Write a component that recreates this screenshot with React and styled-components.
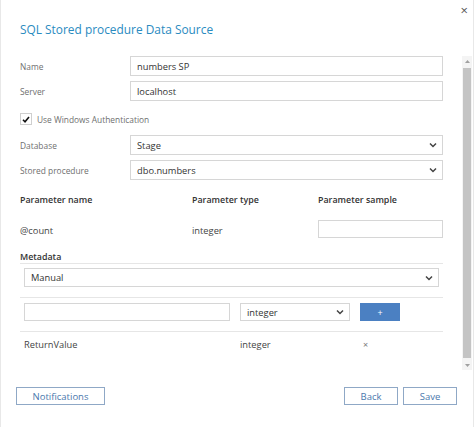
import React from 'react';
import styled, { createGlobalStyle } from 'styled-components';

const GlobalStyle = createGlobalStyle`
    html, body {
        margin: 0;
        padding: 0;
        background: #ffffff;
    }
    body {
        font-family: 'Open Sans', 'Noto Sans', sans-serif;
        color: #333333;
    }
`;

const Chevron = () => (
    <svg width="8" height="6" viewBox="0 0 8 6">
        <path d="M1 1.5 L4 4.5 L7 1.5" fill="none" stroke="#444" strokeWidth="1.5" />
    </svg>
);

const App = () => {
    return (
        <>
            <GlobalStyle />
            <Dialog>
                <CloseButton>×</CloseButton>
                <Title>SQL Stored procedure Data Source</Title>
                <Body>
                    <Content>
                        <FormRow>
                            <Label>Name</Label>
                            <TextBox>numbers SP</TextBox>
                        </FormRow>
                        <FormRow>
                            <Label>Server</Label>
                            <TextBox>localhost</TextBox>
                        </FormRow>
                        <CheckRow>
                            <CheckBox>
                                <svg width="8" height="7" viewBox="0 0 8 7">
                                    <path d="M1 3.8 L3 5.8 L7 1" fill="none" stroke="#111" strokeWidth="1.6" />
                                </svg>
                            </CheckBox>
                            <CheckLabel>Use Windows Authentication</CheckLabel>
                        </CheckRow>
                        <FormRow>
                            <Label>Database</Label>
                            <SelectBox>
                                <span>Stage</span>
                                <Chevron />
                            </SelectBox>
                        </FormRow>
                        <FormRow>
                            <Label>Stored procedure</Label>
                            <SelectBox>
                                <span>dbo.numbers</span>
                                <Chevron />
                            </SelectBox>
                        </FormRow>

                        <ParamHeader>
                            <HeadText>Parameter name</HeadText>
                            <HeadText>Parameter type</HeadText>
                            <HeadText>Parameter sample</HeadText>
                        </ParamHeader>
                        <ParamRow>
                            <CellText>@count</CellText>
                            <CellText>integer</CellText>
                            <SmallBox />
                        </ParamRow>

                        <SectionTitle>Metadata</SectionTitle>
                        <Section>
                            <SelectBox $height={19}>
                                <span>Manual</span>
                                <Chevron />
                            </SelectBox>
                        </Section>
                        <Section>
                            <AddRow>
                                <SmallBox />
                                <SelectBox $height={18}>
                                    <span>integer</span>
                                    <Chevron />
                                </SelectBox>
                                <AddButton>+</AddButton>
                            </AddRow>
                        </Section>
                        <MetaRow>
                            <CellText>ReturnValue</CellText>
                            <CellText>integer</CellText>
                            <RemoveMark>×</RemoveMark>
                        </MetaRow>
                    </Content>
                    <ScrollBar>
                        <ScrollArrow>
                            <svg width="5" height="3" viewBox="0 0 5 3">
                                <path d="M0 3 L2.5 0 L5 3 Z" fill="#a0a0a0" />
                            </svg>
                        </ScrollArrow>
                        <ScrollThumb />
                        <ScrollArrow>
                            <svg width="5" height="3" viewBox="0 0 5 3">
                                <path d="M0 0 L2.5 3 L5 0 Z" fill="#a0a0a0" />
                            </svg>
                        </ScrollArrow>
                    </ScrollBar>
                </Body>
                <Footer>
                    <OutlineButton $width={89}>Notifications</OutlineButton>
                    <FooterRight>
                        <OutlineButton $width={54}>Back</OutlineButton>
                        <OutlineButton $width={54}>Save</OutlineButton>
                    </FooterRight>
                </Footer>
            </Dialog>
        </>
    );
};

export default App;

const Dialog = styled.div`
    position: relative;
    width: 474px;
    height: 427px;
    box-sizing: border-box;
    display: flex;
    flex-direction: column;
    background: #ffffff;
    border-left: 1px solid #e8e8e8;
    border-right: 1px solid #e8e8e8;
`;

const CloseButton = styled.div`
    position: absolute;
    top: 2px;
    right: 5px;
    font-size: 13px;
    color: #555555;
    line-height: 16px;
`;

const Title = styled.h1`
    margin: 0;
    padding: 20px 0 0 19px;
    height: 37px;
    box-sizing: border-box;
    font-size: 11.9px;
    font-weight: 400;
    line-height: 18px;
    color: #2a8bbf;
`;

const Body = styled.div`
    display: flex;
    height: 314px;
    margin-top: 19px;
`;

const Content = styled.div`
    flex: 1;
    padding: 0 19px 0 19px;
    overflow: hidden;
`;

const FormRow = styled.div`
    display: grid;
    grid-template-columns: 110px 1fr;
    align-items: center;
    margin-bottom: 5px;
`;

const Label = styled.span`
    font-size: 8.4px;
    color: #6f6f6f;
`;

const TextBox = styled.div`
    height: 20px;
    box-sizing: border-box;
    border: 1px solid #d6d6d6;
    padding: 0 6px;
    display: flex;
    align-items: center;
    font-size: 9.3px;
    color: #333333;
`;

const SelectBox = styled.div`
    height: ${(p) => p.$height || 20}px;
    box-sizing: border-box;
    border: 1px solid #d6d6d6;
    padding: 0 5px 0 6px;
    display: flex;
    align-items: center;
    justify-content: space-between;
    font-size: 9.3px;
    color: #333333;
`;

const CheckRow = styled.div`
    display: flex;
    align-items: center;
    margin: 12px 0 10px 0;
`;

const CheckBox = styled.div`
    width: 12px;
    height: 12px;
    box-sizing: border-box;
    border: 1px solid #cfcfcf;
    display: flex;
    align-items: center;
    justify-content: center;
    margin-right: 5px;
`;

const CheckLabel = styled.span`
    font-size: 8.4px;
    color: #6f6f6f;
`;

const ParamHeader = styled.div`
    display: grid;
    grid-template-columns: 172px 126px 1fr;
    margin-top: 12px;
    height: 14px;
    align-items: center;
`;

const HeadText = styled.span`
    font-size: 8.9px;
    font-weight: 600;
    color: #333333;
`;

const ParamRow = styled.div`
    display: grid;
    grid-template-columns: 172px 126px 1fr;
    align-items: center;
    margin-top: 14px;
`;

const CellText = styled.span`
    font-size: 9.3px;
    color: #444444;
    padding-top: 3px;
`;

const SmallBox = styled.div`
    height: 18px;
    box-sizing: border-box;
    border: 1px solid #d6d6d6;
`;

const SectionTitle = styled.div`
    margin-top: 12px;
    font-size: 8.9px;
    font-weight: 600;
    color: #333333;
    height: 13px;
    line-height: 13px;
`;

const Section = styled.div`
    border-top: 1px solid #e6e6e6;
    padding: 4px 4px 10px 4px;
`;

const AddRow = styled.div`
    display: grid;
    grid-template-columns: 206px 110px 40px;
    column-gap: 10px;
    align-items: center;
    padding-top: 1px;
`;

const AddButton = styled.div`
    height: 18px;
    background: #4b80c2;
    color: #ffffff;
    font-size: 9px;
    display: flex;
    align-items: center;
    justify-content: center;
`;

const MetaRow = styled.div`
    display: grid;
    grid-template-columns: 216px 123px 1fr;
    align-items: center;
    border-top: 1px solid #e6e6e6;
    padding: 3px 4px 0 4px;
`;

const RemoveMark = styled.span`
    font-size: 9px;
    color: #777777;
    padding-top: 3px;
`;

const ScrollBar = styled.div`
    width: 10px;
    margin-right: 1px;
    display: flex;
    flex-direction: column;
    background: #f4f4f4;
`;

const ScrollArrow = styled.div`
    height: 10px;
    display: flex;
    align-items: center;
    justify-content: center;
`;

const ScrollThumb = styled.div`
    flex: 1;
    margin: 2px 1px;
    background: #c4c4c4;
`;

const Footer = styled.div`
    display: flex;
    justify-content: space-between;
    align-items: center;
    padding: 17px 16px 0 15px;
`;

const FooterRight = styled.div`
    display: flex;
    gap: 5px;
`;

const OutlineButton = styled.div`
    width: ${(p) => p.$width}px;
    height: 18px;
    box-sizing: border-box;
    border: 1px solid #8fa8c6;
    display: flex;
    align-items: center;
    justify-content: center;
    font-size: 9.5px;
    color: #4a78ad;
`;
